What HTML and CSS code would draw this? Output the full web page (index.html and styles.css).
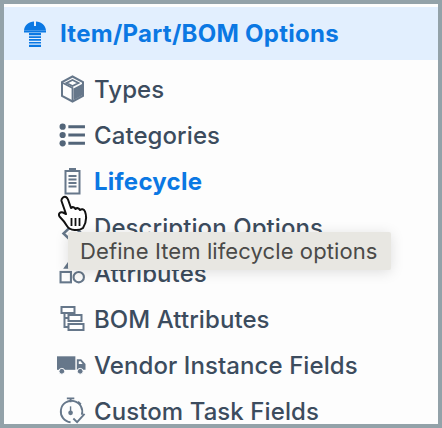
FILE: index.html
```html
<!DOCTYPE html>
<html lang="en">
<head>
<meta charset="utf-8">
<title>Item/Part/BOM Options</title>
<link rel="stylesheet" href="styles.css">
</head>
<body>
<div class="frame">
  <div class="panel">
    <div class="header">
      <svg class="head-icon" viewBox="0 0 24 28" width="24" height="28">
        <path d="M1 10.5C1.500 5 6 2 11 1.600V6h2V1.600C18 2 22.500 5 23 10.500Z" fill="#0b78e3"/>
        <path d="M1 10.500h22V12.500H1Z" fill="#0b78e3"/>
        <path d="M6 13h12v2.200H6Zm0 3.300h12v1.700H6Zm0 2.800h12v1.700H6Zm0 2.800h12v1.700H6Zm0 2.800h12V27H6Z" fill="#0b78e3"/>
      </svg>
      <span>Item/Part/BOM Options</span>
    </div>
    <ul class="menu">
      <li class="row">
        <svg class="icon" viewBox="0 0 24 28"><path d="M12 1.500 22.500 7v14L12 26.500 1.500 21V7Z" fill="none" stroke="#66778a" stroke-width="2"/><path d="M12 5 18 8 12 11 6 8Z" fill="#fff" stroke="#66778a" stroke-width="1.800"/><path d="M13 13.500 21.500 9v11.500L13 25Z" fill="#66778a"/><path d="M2.500 8 12 13v12" fill="none" stroke="#66778a" stroke-width="1.800"/></svg>
        <span>Types</span>
      </li>
      <li class="row">
        <svg class="icon" viewBox="0 0 26 24"><circle cx="3.500" cy="4" r="3" fill="#536579"/><circle cx="3.500" cy="12" r="3" fill="#536579"/><circle cx="3.500" cy="20" r="3" fill="#536579"/><path d="M9 2.500h16v3H9Zm0 8h16v3H9Zm0 8h16v3H9Z" fill="#536579"/></svg>
        <span>Categories</span>
      </li>
      <li class="row active">
        <svg class="icon" viewBox="0 0 24 28"><path d="M8.500 1h7v3h-7Z" fill="#66778a"/><rect x="5" y="4" width="14" height="22.500" fill="none" stroke="#66778a" stroke-width="2"/><path d="M8 8h8v2H8Zm0 3.500h8v2H8Zm0 3.500h8v2H8Zm0 3.500h8v2H8Z" fill="#66778a"/></svg>
        <span>Lifecycle</span>
      </li>
      <li class="row">
        <svg class="icon spill" viewBox="0 0 24 28"><path d="M12 12 21 20.500 12 29 3 20.500Z" fill="none" stroke="#66778a" stroke-width="2.500"/></svg>
        <span>Description Options</span>
      </li>
      <li class="row">
        <svg class="icon" viewBox="0 0 26 24"><path d="M9 1 14 8H4Z" fill="#66778a"/><rect x="1.500" y="11" width="10" height="10" fill="none" stroke="#66778a" stroke-width="2"/><circle cx="19" cy="16" r="5" fill="none" stroke="#66778a" stroke-width="2"/></svg>
        <span>Attributes</span>
      </li>
      <li class="row">
        <svg class="icon" viewBox="0 0 26 28"><path d="M2 2h13v6H2Zm7 8h13v6H9Zm0 9h15v6H9Z" fill="#fff" stroke="#66778a" stroke-width="2"/><path d="M5 8v14h4M5 13h4" fill="none" stroke="#66778a" stroke-width="2"/></svg>
        <span>BOM Attributes</span>
      </li>
      <li class="row">
        <svg class="icon wide" viewBox="0 0 30 20"><path d="M0 1h19v14H0Z" fill="#66778a"/><path d="M20.500 4h4.500l4.500 5v6h-9Z" fill="#66778a"/><path d="M22.500 6h2l2 3h-4Z" fill="#fff"/><circle cx="5" cy="16.500" r="3" fill="#66778a" stroke="#fff"/><circle cx="24" cy="16.500" r="3" fill="#66778a" stroke="#fff"/></svg>
        <span>Vendor Instance Fields</span>
      </li>
      <li class="row">
        <svg class="icon wide" viewBox="0 0 30 30"><path d="M10 1.500h8M14 1.500v4" fill="none" stroke="#66778a" stroke-width="2"/><path d="M26 19A11.500 11.500 0 1 0 14 27" fill="none" stroke="#66778a" stroke-width="2"/><path d="M22 5l3 3" stroke="#66778a" stroke-width="2"/><path d="M14 10v7" stroke="#66778a" stroke-width="1.500"/><circle cx="14" cy="17" r="2.500" fill="#66778a"/><path d="M17 23l4 4 8-9" fill="none" stroke="#66778a" stroke-width="2"/></svg>
        <span>Custom Task Fields</span>
      </li>
    </ul>
    <div class="tooltip">Define Item lifecycle options</div>
    <svg class="cursor" viewBox="0 0 32 38" width="32" height="38">
      <path d="M6 2.500C8 1 10 2 11 4.500L14 13C15.500 11.500 17.500 12 18.500 14 20 12.500 22 13 23 15 24.500 13.500 27 14 28 16.500 30 22 29 28 26 33 22 36 13 36 10 31 8 27.500 5 24 2.500 21.500 1 19 3 16.500 6 17.500L9 19 4.500 6C4.300 4.800 5 3.300 6 2.500Z" fill="#fff" stroke="#111" stroke-width="2" stroke-linejoin="round"/>
      <path d="M14.500 23v8M18.500 23v8M22.500 23v8" stroke="#111" stroke-width="1.800"/>
    </svg>
  </div>
</div>
</body>
</html>
```
FILE: styles.css
```css
* { box-sizing: border-box; }
html, body { margin: 0; padding: 0; }
body { width: 442px; height: 428px; overflow: hidden; font-family: Inter, "Liberation Sans", sans-serif; }
.frame { width: 442px; height: 428px; background: #93a2a9; padding: 4px; }
.panel { position: relative; width: 434px; height: 420px; overflow: hidden; background: #fdfdfd; padding-top: 3px; }
.header { display: flex; align-items: center; height: 53px; background: #e2effe; color: #0b78e3; font-size: 24px; font-weight: 700; letter-spacing: 0.28px; padding-left: 19px; gap: 13px; }
.head-icon { width: 24px; height: 28px; flex: none; }
.menu { list-style: none; margin: 0; padding: 6px 0 0 0; }
.row { display: flex; align-items: center; height: 46px; padding-left: 55px; color: #3c4c5e; font-size: 24px; font-weight: 500; letter-spacing: 0.08px; gap: 8px; }
.row.active { color: #0b78e3; font-weight: 700; letter-spacing: 0.25px; }
.icon { width: 27px; height: 28px; flex: none; }
.icon.wide { width: 29px; margin-left: -2px; }
.icon.spill { overflow: visible; }
.tooltip { position: absolute; left: 64px; top: 228px; height: 38px; width: 323px; padding-left: 12px; display: flex; align-items: center; background: #e8e7e2; color: #4a4a48; font-size: 22px; letter-spacing: 0.1px; border-radius: 2px; box-shadow: 0 2px 14px rgba(0,0,0,.13); }
.cursor { position: absolute; left: 53px; top: 191px; }
```
